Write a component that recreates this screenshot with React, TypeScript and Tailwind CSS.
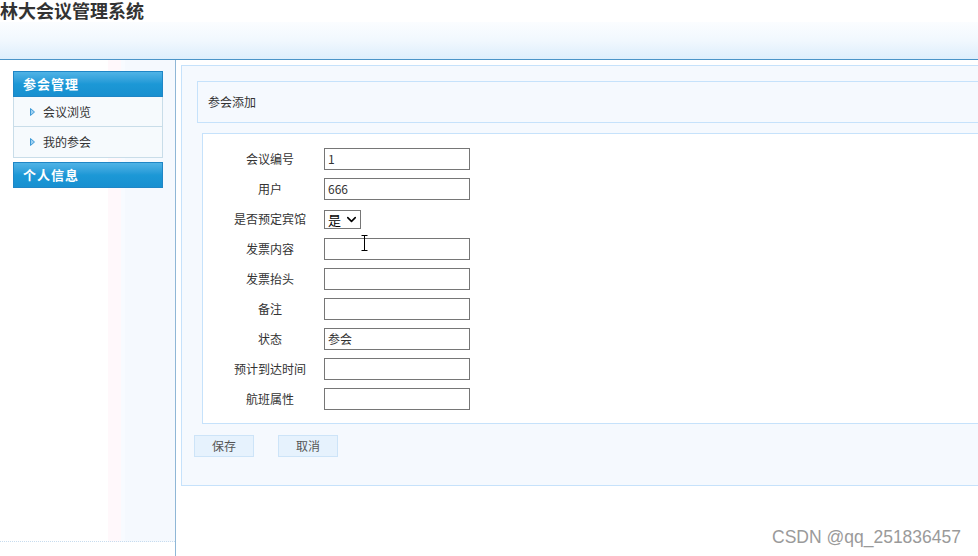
import { ChevronDown } from 'lucide-react'

const fields = [
	{ label: '会议编号', value: '1' },
	{ label: '用户', value: '666' },
	{ label: '是否预定宾馆', select: true },
	{ label: '发票内容', value: '' },
	{ label: '发票抬头', value: '' },
	{ label: '备注', value: '' },
	{ label: '状态', value: '参会' },
	{ label: '预计到达时间', value: '' },
	{ label: '航班属性', value: '' },
]

function MenuHeader({ title }: { title: string }) {
	return (
		<div className="h-[26px] border border-[#1f86c6] bg-gradient-to-b from-[#4fb3e6] via-[#1c98d6] to-[#1890d0] pl-[9px] text-[13px] font-bold leading-[24px] tracking-[1px] text-white">
			{title}
		</div>
	)
}

function MenuItem({ title, last }: { title: string; last?: boolean }) {
	return (
		<div
			className={`flex h-[30px] items-center gap-[8px] bg-[#f6fafd] pl-[16px] text-[12px] text-[#333] ${last ? '' : 'border-b border-[#c9dde9]'}`}
		>
			<svg width="5" height="8" viewBox="0 0 5 8">
				<path d="M0.5 0.5 L4.5 4 L0.5 7.5 Z" fill="#9fd0f0" stroke="#3f9ad6" strokeWidth="1" />
			</svg>
			<span>{title}</span>
		</div>
	)
}

export default function App() {
	return (
		<div className="relative h-[556px] w-[978px] overflow-hidden bg-white font-['Noto_Sans_CJK_SC','Noto_Sans',sans-serif]">
			<h1 className="h-[22px] text-[18px] font-bold leading-[21px] text-[#333]">林大会议管理系统</h1>
			<div className="h-[38px] border-b border-[#4a94c8] bg-gradient-to-b from-[#fbfdff] via-[#f1f8fe] to-[#ddeefc]" />

			<div className="flex h-[496px]">
				{/* sidebar */}
				<aside className="flex w-[176px] shrink-0 flex-col border-r border-[#8fb7d6]">
					<div className="h-[482px] border-b border-dotted border-[#c7dcef] bg-[linear-gradient(to_right,#ffffff_108px,#fff8fb_108px,#fff8fb_121px,#f8fbff_121px,#f8fbff_125px,#f5f9fe_125px)] pl-[13px] pt-[11px]">
						<div className="w-[150px]">
							<MenuHeader title="参会管理" />
							<div className="border-x border-b border-[#c9dde9]">
								<MenuItem title="会议浏览" />
								<MenuItem title="我的参会" last />
							</div>
							<div className="mt-[4px]">
								<MenuHeader title="个人信息" />
							</div>
						</div>
					</div>
				</aside>

				{/* main */}
				<main className="flex-1 overflow-hidden pl-[5px] pt-[5px]">
					<div className="border border-r-0 border-[#c6e2fb] bg-[#f5f9fe] pb-[28px] pl-[15px] pt-[15px]">
						<div className="flex h-[42px] items-center border border-r-0 border-[#c6e2fb] bg-[#f5f9fe] pl-[10px] text-[12px] text-[#333]">
							参会添加
						</div>

						<div className="ml-[5px] mt-[10px] flex flex-col gap-[8px] border border-r-0 border-[#c6e2fb] bg-white pb-[13px] pl-[19px] pt-[14px]">
							{fields.map((f) => (
								<div key={f.label} className="flex h-[22px] items-center">
									<span className="w-[96px] text-center text-[12px] text-[#333]">{f.label}</span>
									<div className="ml-[6px]">
										{f.select ? (
											<div className="flex h-[19px] w-[37px] items-center gap-[3px] border border-[#767676] bg-white pl-[3px] text-[13px] leading-none text-black">
												是
												<ChevronDown className="h-[15px] w-[15px]" strokeWidth={2.5} />
											</div>
										) : (
											<div className="flex h-[22px] w-[146px] items-center border border-[#767676] bg-white pl-[3px] text-[12px] text-[#333]">
												{f.value}
											</div>
										)}
									</div>
								</div>
							))}
						</div>

						<div className="-ml-[3px] mt-[11px] flex gap-[24px]">
							<button className="h-[22px] w-[60px] border border-[#cde4f8] bg-[#e6f2fd] text-[12px] text-[#555]">保存</button>
							<button className="h-[22px] w-[60px] border border-[#cde4f8] bg-[#e6f2fd] text-[12px] text-[#555]">取消</button>
						</div>
					</div>
				</main>
			</div>

			{/* text cursor */}
			<svg className="absolute left-[361px] top-[235px]" width="7" height="16" viewBox="0 0 7 16">
				<path d="M0.5 0.5 H6.5 M3.5 0.5 V15.5 M0.5 15.5 H6.5" stroke="#000" strokeWidth="1" fill="none" />
			</svg>

			{/* watermark */}
			<div className="absolute left-[772px] top-[526px] font-['Liberation_Sans',sans-serif] text-[17.5px] leading-[22px] text-[#9a9a9a]">
				CSDN @qq_251836457
			</div>
		</div>
	)
}
